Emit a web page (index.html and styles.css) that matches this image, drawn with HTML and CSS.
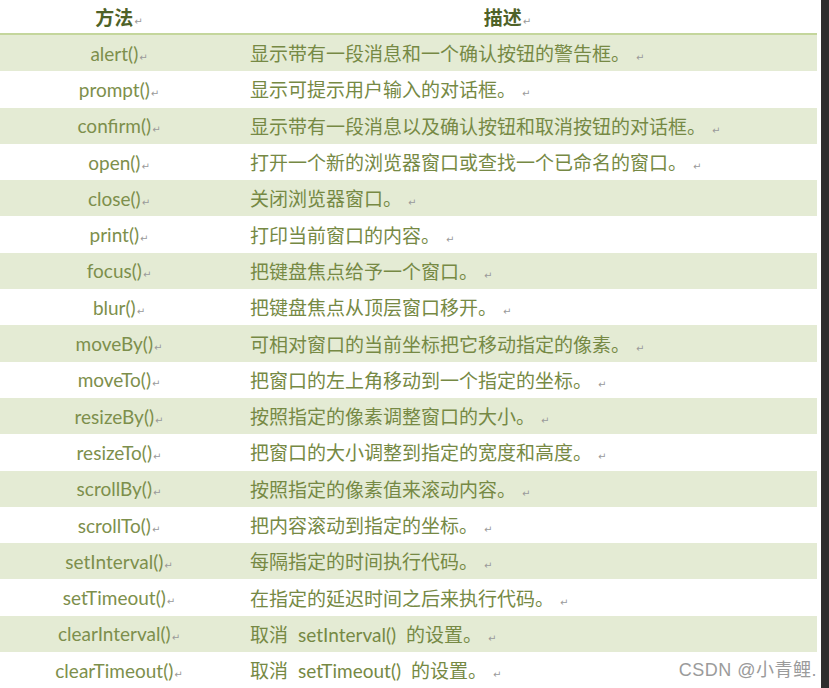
FILE: index.html
```html
<!DOCTYPE html>
<html lang="zh">
<head>
<meta charset="utf-8">
<link rel="stylesheet" href="styles.css">
</head>
<body>
<div class="page">
  <table class="methods">
    <thead>
      <tr><th class="c1">方法<span class="rm">↵</span></th><th class="c2">描述<span class="rm">↵</span></th></tr>
    </thead>
    <tbody>
      <tr><td class="c1">alert()<span class="rm">↵</span></td><td class="c2">显示带有一段消息和一个确认按钮的警告框。<span class="rm">↵</span></td></tr>
      <tr><td class="c1">prompt()<span class="rm">↵</span></td><td class="c2">显示可提示用户输入的对话框。<span class="rm">↵</span></td></tr>
      <tr><td class="c1">confirm()<span class="rm">↵</span></td><td class="c2">显示带有一段消息以及确认按钮和取消按钮的对话框。<span class="rm">↵</span></td></tr>
      <tr><td class="c1">open()<span class="rm">↵</span></td><td class="c2">打开一个新的浏览器窗口或查找一个已命名的窗口。<span class="rm">↵</span></td></tr>
      <tr><td class="c1">close()<span class="rm">↵</span></td><td class="c2">关闭浏览器窗口。<span class="rm">↵</span></td></tr>
      <tr><td class="c1">print()<span class="rm">↵</span></td><td class="c2">打印当前窗口的内容。<span class="rm">↵</span></td></tr>
      <tr><td class="c1">focus()<span class="rm">↵</span></td><td class="c2">把键盘焦点给予一个窗口。<span class="rm">↵</span></td></tr>
      <tr><td class="c1">blur()<span class="rm">↵</span></td><td class="c2">把键盘焦点从顶层窗口移开。<span class="rm">↵</span></td></tr>
      <tr><td class="c1">moveBy()<span class="rm">↵</span></td><td class="c2">可相对窗口的当前坐标把它移动指定的像素。<span class="rm">↵</span></td></tr>
      <tr><td class="c1">moveTo()<span class="rm">↵</span></td><td class="c2">把窗口的左上角移动到一个指定的坐标。<span class="rm">↵</span></td></tr>
      <tr><td class="c1">resizeBy()<span class="rm">↵</span></td><td class="c2">按照指定的像素调整窗口的大小。<span class="rm">↵</span></td></tr>
      <tr><td class="c1">resizeTo()<span class="rm">↵</span></td><td class="c2">把窗口的大小调整到指定的宽度和高度。<span class="rm">↵</span></td></tr>
      <tr><td class="c1">scrollBy()<span class="rm">↵</span></td><td class="c2">按照指定的像素值来滚动内容。<span class="rm">↵</span></td></tr>
      <tr><td class="c1">scrollTo()<span class="rm">↵</span></td><td class="c2">把内容滚动到指定的坐标。<span class="rm">↵</span></td></tr>
      <tr><td class="c1">setInterval()<span class="rm">↵</span></td><td class="c2">每隔指定的时间执行代码。<span class="rm">↵</span></td></tr>
      <tr><td class="c1">setTimeout()<span class="rm">↵</span></td><td class="c2">在指定的延迟时间之后来执行代码。<span class="rm">↵</span></td></tr>
      <tr><td class="c1">clearInterval()<span class="rm">↵</span></td><td class="c2">取消<span class="lat">setInterval()</span>的设置。<span class="rm">↵</span></td></tr>
      <tr><td class="c1">clearTimeout()<span class="rm">↵</span></td><td class="c2">取消<span class="lat">setTimeout()</span>的设置。<span class="rm">↵</span></td></tr>
    </tbody>
  </table>
  <div class="gap"></div>
  <div class="strip"></div>
  <div class="watermark">CSDN @小青鲤.</div>
</div>
</body>
</html>
```

FILE: styles.css
```css
html, body {
  margin: 0;
  padding: 0;
  background: #ffffff;
}
.page {
  position: relative;
  display: flex;
  width: 829px;
  height: 688px;
  overflow: hidden;
}
.methods {
  width: 817px;
  flex: none;
  border-collapse: collapse;
  table-layout: fixed;
  font-family: Lato, "Noto Sans CJK SC", sans-serif;
  font-size: 19px;
  color: #7d8f4c;
}
.methods th {
  height: 33px;
  padding: 0;
  font-family: "Noto Sans CJK SC", sans-serif;
  font-weight: bold;
  font-size: 19px;
  color: #4f6228;
  border-bottom: 2px solid #c4d69c;
  vertical-align: middle;
  line-height: 1;
}
.methods th.c2 {
  padding-right: 40px;
}
.methods td {
  height: 36.3px;
  padding: 0;
  vertical-align: middle;
  line-height: 1;
}
.methods tbody tr:nth-child(odd) {
  background: #e4ebd4;
}
.c1 {
  width: 238px;
  text-align: center;
}
.methods td.c2 {
  padding-left: 12px;
  font-family: "Noto Sans CJK SC", sans-serif;
  font-size: 19px;
  color: #768944;
  text-align: left;
}
.lat {
  font-family: Lato, sans-serif;
  font-size: 19px;
  margin: 0 10px 0 10px;
}
.rm {
  font-family: "DejaVu Sans", sans-serif;
  font-size: 10px;
  font-weight: normal;
  color: #9a9a9a;
  margin-left: 1px;
}
.methods td.c2 .rm {
  margin-left: 6px;
}
.gap {
  width: 4px;
  flex: none;
}
.strip {
  width: 8px;
  flex: none;
  background: #2e2e2e;
}
.watermark {
  position: absolute;
  right: 12px;
  bottom: 7px;
  font-family: "Liberation Sans", "Noto Sans CJK SC", sans-serif;
  font-size: 18px;
  letter-spacing: 0.5px;
  color: #9b9b9b;
}
```
